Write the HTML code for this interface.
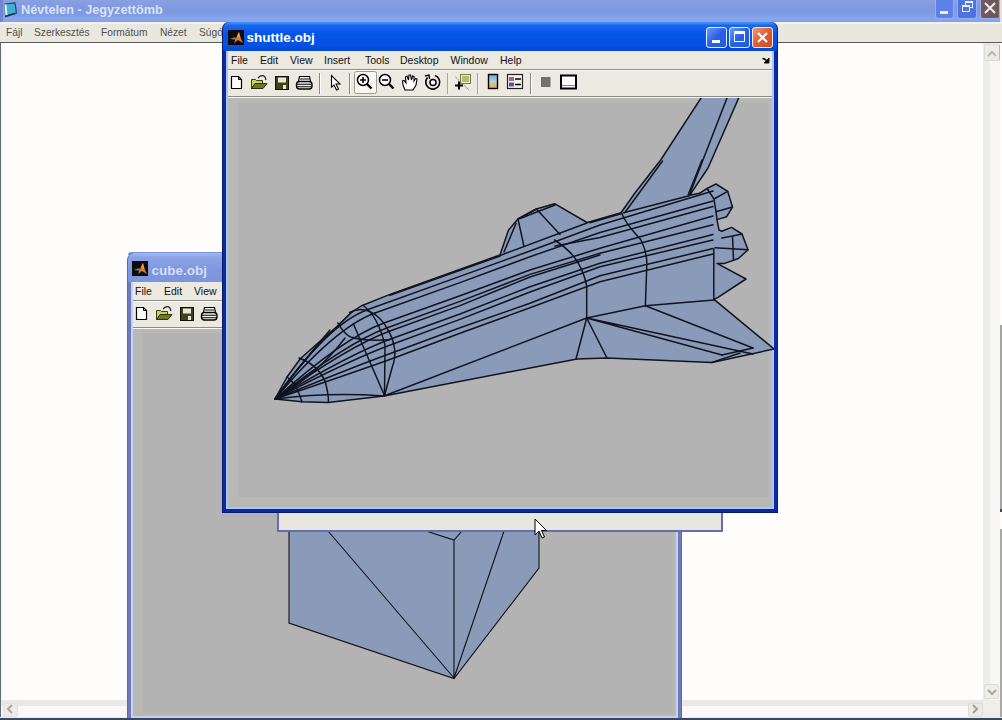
<!DOCTYPE html>
<html><head><meta charset="utf-8">
<style>
*{margin:0;padding:0;box-sizing:border-box}
html,body{width:1002px;height:720px;overflow:hidden;background:#fffdfb;font-family:"Liberation Sans",sans-serif;font-size:11px}
.abs{position:absolute}
.menu span{position:absolute;color:#111;font-size:10.5px;top:3px}
.ttl{position:absolute;font-weight:bold;font-size:13px;white-space:nowrap}
svg{position:absolute;left:0;top:0}
</style></head><body>
<!-- ===== NOTEPAD ===== -->
<div class="abs" style="left:0;top:0;width:1002px;height:22px;background:linear-gradient(180deg,#8aa0e2 0%,#7f98e0 40%,#7e9ae2 65%,#8aa6ec 85%,#84a0e8 100%)"></div>
<div class="abs" style="left:0;top:0;width:3px;height:22px;background:#6f86d0"></div>
<div class="ttl" style="left:21px;top:3px;color:#d8e3f8;font-size:12.7px">Névtelen - Jegyzettömb</div>
<svg width="18" height="18" style="left:2px;top:1px"><path d="M3,3 L13,2 L14.5,12 L4,15 Z" fill="#3fb0d2" stroke="#1f4a70" stroke-width="1.2"/><path d="M3.5,3.5 L4.5,14.5" stroke="#e0f6ff" stroke-width="2"/><path d="M3,15.5 L13,12.5" stroke="#1a3050" stroke-width="1.5"/></svg>
<div class="abs" style="left:935px;top:-3px;width:19px;height:22px;background:#5d80e8;border:1px solid #98b0f0;border-radius:3px"><div class="abs" style="left:4px;top:13px;width:8px;height:3px;background:#e8eefc"></div></div>
<div class="abs" style="left:957px;top:-3px;width:20px;height:22px;background:#4f74e0;border:1px solid #98b0f0;border-radius:3px">
  <div class="abs" style="left:7px;top:3px;width:8px;height:7px;border:1px solid #e8eefc;border-top:2px solid #e8eefc"></div>
  <div class="abs" style="left:4px;top:7px;width:8px;height:7px;border:1px solid #e8eefc;border-top:2px solid #e8eefc;background:#4f74e0"></div>
</div>
<div class="abs" style="left:980px;top:-3px;width:20px;height:22px;background:#6e5a5c;border:1px solid #98b0f0;border-radius:3px">
  <svg width="18" height="20" style="left:0;top:0"><path d="M4,5 L14,15 M14,5 L4,15" stroke="#f0ecec" stroke-width="2"/></svg>
</div>
<div class="abs" style="left:1000px;top:0;width:2px;height:22px;background:#e8e0d8"></div>
<div class="abs" style="left:0;top:22px;width:1002px;height:20px;background:#e9e8df"></div><div class="abs" style="left:0;top:22px;width:1002px;height:2px;background:#f2f1ea"></div>
<div class="menu" style="position:absolute;left:0;top:22px;width:230px;height:20px">
  <span style="left:6px;font-size:10.2px;color:#505050;top:4.5px">Fájl</span>
  <span style="left:34px;font-size:10.2px;color:#505050;top:4.5px">Szerkesztés</span>
  <span style="left:101px;font-size:10.2px;color:#505050;top:4.5px">Formátum</span>
  <span style="left:160px;font-size:10.2px;color:#505050;top:4.5px">Nézet</span>
  <span style="left:199px;font-size:10.2px;color:#505050;top:4.5px">Súgó</span>
</div>
<div class="abs" style="left:0;top:42px;width:1002px;height:1px;background:#585858"></div>
<div class="abs" style="left:0;top:43px;width:1px;height:677px;background:#646a78"></div><div class="abs" style="left:1px;top:43px;width:2px;height:657px;background:#f6f8fc"></div>
<!-- vertical scrollbar -->
<div class="abs" style="left:983px;top:43px;width:17px;height:657px;background:#f7f7f5"></div>
<div class="abs" style="left:983px;top:43px;width:7px;height:657px;background:#ededeb"></div>
<div class="abs" style="left:984px;top:44px;width:16px;height:17px;background:#ecebe6;border:1px solid #dedcd6;border-right:1px solid #b8b8b4;border-radius:2px"></div>
<svg width="16" height="12" style="left:984px;top:48px"><path d="M4,8 L8,4 L12,8" stroke="#b8b8b0" stroke-width="2" fill="none"/></svg>
<div class="abs" style="left:1000px;top:325px;width:2px;height:185px;background:#a4a4a4"></div>
<div class="abs" style="left:1000px;top:509px;width:2px;height:3px;background:#5c4434"></div>
<div class="abs" style="left:1000px;top:529px;width:2px;height:188px;background:#a8a8a8"></div>
<div class="abs" style="left:984px;top:684px;width:15px;height:15px;background:#eeede8;border:1px solid #e0ded8;border-radius:2px"></div>
<svg width="16" height="12" style="left:984px;top:686px"><path d="M4,4 L8,8 L12,4" stroke="#a8a8a0" stroke-width="2" fill="none"/></svg>
<!-- horizontal scrollbar -->
<div class="abs" style="left:1px;top:700px;width:982px;height:17px;background:#f9f8f6"></div>
<div class="abs" style="left:1px;top:700px;width:982px;height:6px;background:#e9e8e4"></div>
<div class="abs" style="left:3px;top:703px;width:15px;height:14px;background:#ecebe6;border:1px solid #e4e2dc;border-radius:2px"></div>
<svg width="16" height="16" style="left:2px;top:701px"><path d="M10,4 L6,8 L10,12" stroke="#a8a8a0" stroke-width="2" fill="none"/></svg>
<div class="abs" style="left:968px;top:703px;width:15px;height:14px;background:#ecebe6;border:1px solid #dedcd6;border-radius:2px"></div>
<svg width="16" height="16" style="left:967px;top:700px"><path d="M6,5 L10,9 L6,13" stroke="#a0a09a" stroke-width="2" fill="none"/></svg>
<div class="abs" style="left:983px;top:700px;width:17px;height:17px;background:#efeeea"></div>
<div class="abs" style="left:0;top:717px;width:1002px;height:1px;background:#e8ecf8"></div><div class="abs" style="left:0;top:718px;width:1002px;height:2px;background:#3c4660"></div>
<div class="abs" style="left:128px;top:252px;width:553px;height:3px;background:#7b94dc;border-radius:7px 7px 0 0"></div><div class="abs" style="left:127px;top:253px;width:555px;height:477px;background:#6e7abc;border:1px solid #5e68a4;border-top:none;border-radius:7px 7px 0 0"></div>
<div class="abs" style="left:128px;top:253px;width:553px;height:29px;background:linear-gradient(180deg,#a4b8f0 0%,#8ca4e6 15%,#7e98e0 60%,#7b94dc 100%);border-radius:7px 7px 0 0"></div>
<div class="abs" style="left:131px;top:282px;width:547px;height:444px;background:#c8d2f2"></div>
<div class="abs" style="left:133px;top:282px;width:543px;height:442px;background:#b4b4b4"></div>
<div class="abs" style="left:133px;top:282px;width:543px;height:19px;background:#ebe9e0;border-bottom:1px solid #8e8e8a"></div>
<div class="abs" style="left:133px;top:301px;width:543px;height:1px;background:#fbfaf6"></div>
<div class="abs" style="left:133px;top:302px;width:543px;height:26px;background:#ebe9e0;border-bottom:1px solid #8a8a86"></div>
<div class="abs" style="left:133px;top:328px;width:543px;height:1px;background:#f6f6f2"></div>
<div class="abs" style="left:133px;top:329px;width:543px;height:395px;background:#b8b8b4"></div>
<div class="abs" style="left:143px;top:333px;width:530px;height:381px;background:#b3b3b3"></div>
<svg width="17" height="16" style="left:132px;top:261px"><rect width="16" height="15" fill="#0e0c0a"/><path d="M2,9 L7,7 L9,10 Z" fill="#5a8a90"/><path d="M6,13 L9,6 L11,2 L13,9 L15,13 L10,10 Z" fill="#e07a30"/><path d="M9,6 L11,2 L12,8 Z" fill="#f0a050"/></svg>
<div class="ttl" style="left:151.5px;top:262.5px;color:#d4dff8;font-size:13.5px">cube.obj</div>
<div class="menu abs" style="left:133px;top:282px;width:545px;height:19px"><span style="left:2px">File</span><span style="left:31px">Edit</span><span style="left:61px">View</span></div>
<svg width="1002" height="720" style="left:0;top:0"><g transform="translate(-95,231)"><path d="M231.5,76.5 L238.5,76.5 L241.5,79.5 L241.5,88.5 L231.5,88.5 Z" fill="#fff" stroke="#000" stroke-width="1.2"/><path d="M238.5,76.5 L238.5,79.5 L241.5,79.5" fill="none" stroke="#000"/><path d="M251.5,79.5 L255.5,79.5 L256.5,80.5 L262.5,80.5 L262.5,83 L251.5,88.5 Z" fill="#c8d060" stroke="#3a4010"/><path d="M251.5,88.5 L255,83.5 L267,83.5 L263,88.5 Z" fill="#6c7a20" stroke="#2a3008"/><path d="M258,78 Q262,74 265,77 L266,80" fill="none" stroke="#202020" stroke-width="1.2"/><rect x="275.5" y="76.5" width="13" height="13" fill="#3c4418" stroke="#101008"/><rect x="278" y="77.5" width="8" height="5" fill="#e8e8d8"/><rect x="283" y="85" width="3" height="4" fill="#e8e8d8"/><path d="M299.5,76.5 L309.5,76.5 L310.5,81.5 L298.5,81.5 Z" fill="#fff" stroke="#000" stroke-width="1.2"/><path d="M300,79 L309.5,79" stroke="#000" stroke-width="1"/><rect x="296.5" y="81.5" width="15.5" height="7.5" rx="3" fill="#f4f4ee" stroke="#000" stroke-width="1.4"/><path d="M297,84.3 L311.5,84.3 M297,86.8 L311.5,86.8" stroke="#000" stroke-width="1.1"/><path d="M319.5,73 L319.5,94" stroke="#8a8a84" stroke-width="1"/><path d="M320.5,73 L320.5,94" stroke="#fafaf6" stroke-width="1"/><path d="M349.5,73 L349.5,94" stroke="#8a8a84" stroke-width="1"/><path d="M350.5,73 L350.5,94" stroke="#fafaf6" stroke-width="1"/><path d="M447.8,73 L447.8,94" stroke="#8a8a84" stroke-width="1"/><path d="M448.8,73 L448.8,94" stroke="#fafaf6" stroke-width="1"/><path d="M477.8,73 L477.8,94" stroke="#8a8a84" stroke-width="1"/><path d="M478.8,73 L478.8,94" stroke="#fafaf6" stroke-width="1"/><path d="M530.5,73 L530.5,94" stroke="#8a8a84" stroke-width="1"/><path d="M531.5,73 L531.5,94" stroke="#fafaf6" stroke-width="1"/><path d="M331.5,75.5 L331.5,87 L334,85 L336.5,90 L338.5,89 L336,84 L340,84 Z" fill="#fff" stroke="#000" stroke-width="1.1"/><rect x="354.5" y="71.5" width="22" height="22" rx="2" fill="#f7f6f1" stroke="#9a9a96"/><circle cx="363" cy="80" r="5.5" fill="#fff" stroke="#000" stroke-width="1.5"/><path d="M367,84 L371.5,88.5" stroke="#000" stroke-width="2.4"/><path d="M360,80 L366,80 M363,77 L363,83" stroke="#000" stroke-width="1.6"/><circle cx="385" cy="80" r="5.5" fill="#fff" stroke="#000" stroke-width="1.5"/><path d="M389,84 L393.5,88.5" stroke="#000" stroke-width="2.4"/><path d="M382,80 L388,80" stroke="#000" stroke-width="1.6"/><path d="M405,90 L403,85 L402.5,81 L404,80.5 L406,83 L405.5,77 L407,76 L408.5,80 L409,75 L410.5,75 L411.5,80 L412.5,76 L414,76.5 L414,81 L415.5,78.5 L417,79 L416,85 L413,90 Z" fill="#fff" stroke="#000" stroke-width="1.1"/><path d="M427.5,77.5 A7,7 0 1 0 435,75.5" fill="none" stroke="#000" stroke-width="1.6"/><path d="M425,76 L429,75 L429.5,79" fill="none" stroke="#000" stroke-width="1.4"/><circle cx="433" cy="82.5" r="3" fill="#fff" stroke="#000" stroke-width="1.5"/><rect x="460.5" y="74.5" width="10" height="9" fill="#eef0b4" stroke="#7a7a40"/><path d="M462,77 L469,77 M462,79 L469,79 M462,81 L469,81" stroke="#6a7a20" stroke-width="0.9"/><path d="M455.5,77 L469,90" stroke="#6060a0" stroke-width="0.8" stroke-dasharray="2,1"/><path d="M455,85.5 L463,85.5 M459,81.5 L459,89.5" stroke="#000" stroke-width="2"/><defs><linearGradient id="cb" x1="0" y1="0" x2="0" y2="1"><stop offset="0" stop-color="#6aa0ff"/><stop offset="0.5" stop-color="#b0d8c0"/><stop offset="1" stop-color="#ff9a40"/></linearGradient></defs><rect x="488.5" y="74.5" width="9" height="14" fill="url(#cb)" stroke="#000" stroke-width="1.4"/><rect x="507.5" y="74.5" width="15" height="14" fill="#f4f4ec" stroke="#202020" stroke-width="1.2"/><rect x="509" y="77" width="5" height="4" fill="#c06060"/><rect x="509" y="82.5" width="5" height="4" fill="#5050c0"/><path d="M515,79 L521,79 M515,84.5 L521,84.5" stroke="#000" stroke-width="1.5"/><rect x="541" y="77" width="9.5" height="10" fill="#707070"/><rect x="561" y="75.5" width="15" height="13" fill="#fff" stroke="#000" stroke-width="2"/><path d="M562,85.5 L575,85.5" stroke="#888" stroke-width="1"/></g></svg><svg width="1002" height="720"><g stroke="#111" stroke-width="1.1" fill="none">
  <polygon points="289,531 539,531 539,568 454,678.5 289,623" fill="#8a9bba"/>
  <path d="M454,540 L454,678 M426,531 L454,540 L462,531 M328,531 L454,678 M504,531 L454,678"/>
</g></svg><div class="abs" style="left:131px;top:716px;width:547px;height:2px;background:#c8d0ee"></div><div class="abs" style="left:127px;top:718px;width:555px;height:2px;background:#3c4660"></div><div class="abs" style="left:277px;top:509px;width:446px;height:23px;background:#e8e7df;border:2px solid #646eae;border-top:none"></div><div class="abs" style="left:222px;top:22px;width:556px;height:491px;background:#0c2aa6;border:1px solid #081a70;border-top:none;border-radius:7px 7px 0 0"></div>
<div class="abs" style="left:223px;top:22px;width:554px;height:29px;background:linear-gradient(180deg,#4a98fa 0%,#1a66f0 12%,#0556e8 40%,#0452e4 80%,#0648d2 100%);border-radius:7px 7px 0 0"></div>
<div class="abs" style="left:226px;top:51px;width:548px;height:458px;background:#a8c6f6"></div>
<div class="abs" style="left:228px;top:51px;width:544px;height:456px;background:#b4b4b4"></div>
<div class="abs" style="left:228px;top:51px;width:544px;height:19px;background:#ebe9e0;border-bottom:1px solid #8e8e8a"></div>
<div class="abs" style="left:228px;top:70px;width:544px;height:1px;background:#fbfaf6"></div>
<div class="abs" style="left:228px;top:71px;width:544px;height:26px;background:#ebe9e0;border-bottom:1px solid #8a8a86"></div>
<div class="abs" style="left:228px;top:97px;width:544px;height:1px;background:#f6f6f2"></div>
<div class="abs" style="left:228px;top:98px;width:544px;height:409px;background:#b8b8b4"></div>
<div class="abs" style="left:238px;top:102px;width:531px;height:395px;background:#b3b3b3"></div>
<svg width="17" height="16" style="left:228px;top:30px"><rect width="16" height="15" fill="#0e0c0a"/><path d="M2,9 L7,7 L9,10 Z" fill="#5a8a90"/><path d="M6,13 L9,6 L11,2 L13,9 L15,13 L10,10 Z" fill="#e07a30"/><path d="M9,6 L11,2 L12,8 Z" fill="#f0a050"/></svg>
<div class="ttl" style="left:246.5px;top:29.5px;color:#ffffff;font-size:13.5px">shuttle.obj</div>
<div class="menu abs" style="left:228px;top:51px;width:546px;height:19px"><span style="left:3px">File</span><span style="left:32px">Edit</span><span style="left:62px">View</span><span style="left:96px">Insert</span><span style="left:137px">Tools</span><span style="left:172px">Desktop</span><span style="left:222.5px">Window</span><span style="left:272px">Help</span></div>
<svg width="1002" height="720" style="left:0;top:0"><g transform="translate(0,0)"><path d="M231.5,76.5 L238.5,76.5 L241.5,79.5 L241.5,88.5 L231.5,88.5 Z" fill="#fff" stroke="#000" stroke-width="1.2"/><path d="M238.5,76.5 L238.5,79.5 L241.5,79.5" fill="none" stroke="#000"/><path d="M251.5,79.5 L255.5,79.5 L256.5,80.5 L262.5,80.5 L262.5,83 L251.5,88.5 Z" fill="#c8d060" stroke="#3a4010"/><path d="M251.5,88.5 L255,83.5 L267,83.5 L263,88.5 Z" fill="#6c7a20" stroke="#2a3008"/><path d="M258,78 Q262,74 265,77 L266,80" fill="none" stroke="#202020" stroke-width="1.2"/><rect x="275.5" y="76.5" width="13" height="13" fill="#3c4418" stroke="#101008"/><rect x="278" y="77.5" width="8" height="5" fill="#e8e8d8"/><rect x="283" y="85" width="3" height="4" fill="#e8e8d8"/><path d="M299.5,76.5 L309.5,76.5 L310.5,81.5 L298.5,81.5 Z" fill="#fff" stroke="#000" stroke-width="1.2"/><path d="M300,79 L309.5,79" stroke="#000" stroke-width="1"/><rect x="296.5" y="81.5" width="15.5" height="7.5" rx="3" fill="#f4f4ee" stroke="#000" stroke-width="1.4"/><path d="M297,84.3 L311.5,84.3 M297,86.8 L311.5,86.8" stroke="#000" stroke-width="1.1"/><path d="M319.5,73 L319.5,94" stroke="#8a8a84" stroke-width="1"/><path d="M320.5,73 L320.5,94" stroke="#fafaf6" stroke-width="1"/><path d="M349.5,73 L349.5,94" stroke="#8a8a84" stroke-width="1"/><path d="M350.5,73 L350.5,94" stroke="#fafaf6" stroke-width="1"/><path d="M447.8,73 L447.8,94" stroke="#8a8a84" stroke-width="1"/><path d="M448.8,73 L448.8,94" stroke="#fafaf6" stroke-width="1"/><path d="M477.8,73 L477.8,94" stroke="#8a8a84" stroke-width="1"/><path d="M478.8,73 L478.8,94" stroke="#fafaf6" stroke-width="1"/><path d="M530.5,73 L530.5,94" stroke="#8a8a84" stroke-width="1"/><path d="M531.5,73 L531.5,94" stroke="#fafaf6" stroke-width="1"/><path d="M331.5,75.5 L331.5,87 L334,85 L336.5,90 L338.5,89 L336,84 L340,84 Z" fill="#fff" stroke="#000" stroke-width="1.1"/><rect x="354.5" y="71.5" width="22" height="22" rx="2" fill="#f7f6f1" stroke="#9a9a96"/><circle cx="363" cy="80" r="5.5" fill="#fff" stroke="#000" stroke-width="1.5"/><path d="M367,84 L371.5,88.5" stroke="#000" stroke-width="2.4"/><path d="M360,80 L366,80 M363,77 L363,83" stroke="#000" stroke-width="1.6"/><circle cx="385" cy="80" r="5.5" fill="#fff" stroke="#000" stroke-width="1.5"/><path d="M389,84 L393.5,88.5" stroke="#000" stroke-width="2.4"/><path d="M382,80 L388,80" stroke="#000" stroke-width="1.6"/><path d="M405,90 L403,85 L402.5,81 L404,80.5 L406,83 L405.5,77 L407,76 L408.5,80 L409,75 L410.5,75 L411.5,80 L412.5,76 L414,76.5 L414,81 L415.5,78.5 L417,79 L416,85 L413,90 Z" fill="#fff" stroke="#000" stroke-width="1.1"/><path d="M427.5,77.5 A7,7 0 1 0 435,75.5" fill="none" stroke="#000" stroke-width="1.6"/><path d="M425,76 L429,75 L429.5,79" fill="none" stroke="#000" stroke-width="1.4"/><circle cx="433" cy="82.5" r="3" fill="#fff" stroke="#000" stroke-width="1.5"/><rect x="460.5" y="74.5" width="10" height="9" fill="#eef0b4" stroke="#7a7a40"/><path d="M462,77 L469,77 M462,79 L469,79 M462,81 L469,81" stroke="#6a7a20" stroke-width="0.9"/><path d="M455.5,77 L469,90" stroke="#6060a0" stroke-width="0.8" stroke-dasharray="2,1"/><path d="M455,85.5 L463,85.5 M459,81.5 L459,89.5" stroke="#000" stroke-width="2"/><defs><linearGradient id="cb" x1="0" y1="0" x2="0" y2="1"><stop offset="0" stop-color="#6aa0ff"/><stop offset="0.5" stop-color="#b0d8c0"/><stop offset="1" stop-color="#ff9a40"/></linearGradient></defs><rect x="488.5" y="74.5" width="9" height="14" fill="url(#cb)" stroke="#000" stroke-width="1.4"/><rect x="507.5" y="74.5" width="15" height="14" fill="#f4f4ec" stroke="#202020" stroke-width="1.2"/><rect x="509" y="77" width="5" height="4" fill="#c06060"/><rect x="509" y="82.5" width="5" height="4" fill="#5050c0"/><path d="M515,79 L521,79 M515,84.5 L521,84.5" stroke="#000" stroke-width="1.5"/><rect x="541" y="77" width="9.5" height="10" fill="#707070"/><rect x="561" y="75.5" width="15" height="13" fill="#fff" stroke="#000" stroke-width="2"/><path d="M562,85.5 L575,85.5" stroke="#888" stroke-width="1"/></g></svg>
<div class="abs" style="left:706px;top:27px;width:21px;height:21px;background:linear-gradient(135deg,#6a9af8,#2a60e8 50%,#2458e0);border:1px solid #e8f0ff;border-radius:3px"><div class="abs" style="left:5px;top:12px;width:8px;height:3px;background:#fff"></div></div>
<div class="abs" style="left:729px;top:27px;width:21px;height:21px;background:linear-gradient(135deg,#6a9af8,#2a60e8 50%,#2458e0);border:1px solid #e8f0ff;border-radius:3px"><div class="abs" style="left:4px;top:3px;width:11px;height:11px;border:1px solid #fff;border-top:3px solid #fff"></div></div>
<div class="abs" style="left:752px;top:27px;width:21px;height:21px;background:linear-gradient(135deg,#f09a78,#e05a32 50%,#d04a24);border:1px solid #f4ecec;border-radius:3px"><svg width="19" height="19" style="left:0;top:0"><path d="M5,5 L14,14 M14,5 L5,14" stroke="#fff" stroke-width="2.2"/></svg></div>
<svg width="12" height="10" style="left:760px;top:55px"><path d="M9,3 L9,8 L4,8 Z" fill="#000" stroke="#000" stroke-width="0.9"/><path d="M2.5,3.5 L4.5,4 L7,6" stroke="#000" stroke-width="1.6" fill="none"/></svg>
<!-- shuttle model -->
<svg width="1002" height="720"><defs><clipPath id="ax"><rect x="228" y="98" width="546" height="410"/></clipPath></defs><g clip-path="url(#ax)" stroke="#10141e" stroke-width="1.5" fill="none" stroke-linejoin="round" stroke-linecap="round"><polygon fill="#8a9bba" points="275,399 281,388 287,377 300.5,358.5 319.7,341.5 337.8,326 350.8,313 361,306 390,294.4 500,255 508.5,230 518,219 536.4,209 554.6,203.7 587,222.5 590,221.7 621,212.7 635.5,192.3 660.7,160 703,95 740,95 708,168 689.7,195.3 699.5,193.3 707,188.5 716,184 727.7,191.4 732.5,207 726.7,216.7 717,219.6 719,230 721.8,231.3 731.5,227.4 742,234 748,249.8 738.4,258.5 724.7,263.4 717,263.4 746,279 718,297.4 714,299.4 774,349 712,362.4 607,358 577,359 384,396 328,402.5 302,401.8"/><path d="M368,309.5 L460,276.4 L530,251 L600,225 L713,191"/><path d="M375,313 L460,282.6 L530,256.7 L600,232.5 L713,201"/><path d="M555,246 L600,237.5 L713,206.5"/><path d="M384,323 L460,295.8 L530,270 L600,248.3 L713,216"/><path d="M388,327.5 L460,301.4 L530,274.4 L600,253.3 L713,224.7"/><path d="M390,331 L460,305.6 L530,277 L600,255"/><path d="M392,338.5 L460,314 L530,286.7 L600,263.3 L713,234.5"/><path d="M393,344 L460,319.4 L530,292 L600,266.7 L713,240"/><path d="M394.5,352 L460,327.8 L530,303.3 L600,275.8 L713,248.5"/><path d="M394,358 L460,333.3 L530,307.8 L600,281.7 L713,254"/><path d="M275,399 Q328.0,323.9 368,309.5"/><path d="M275,399 Q335.0,327.4 375,313"/><path d="M275,399 Q344.0,337.4 384,323"/><path d="M275,399 Q348.0,341.9 388,327.5"/><path d="M275,399 Q350.0,345.4 390,331"/><path d="M275,399 Q352.0,352.9 392,338.5"/><path d="M275,399 Q353.0,358.4 393,344"/><path d="M275,399 Q354.5,366.4 394.5,352"/><path d="M275,399 Q354.0,372.4 394,358"/><path d="M275,399 Q310,350 352,312"/><path d="M275,399 Q330,392 384,396"/><path d="M275,399 Q300,365 330,330"/><path d="M275,399 Q320,372 345,338"/><path d="M390,295.4 L500,256 M590,222.7 L621,213.7"/><path d="M500,255.5 L587,223 M516,223.5 L504,252 M520,218.5 L555,205"/><path d="M384,396 L586.7,318 L645.4,305.7 L714,300"/><path d="M554.6,240 C570,250 582,262 586.7,286 L586.7,318"/><path d="M621.6,213 C626,225 636,234 641,240 C646,250 647,258 646.8,265 L645.4,305.7"/><path d="M586.7,318 L576,359 M586.7,318 L607,358 M586.7,318 L722,355 M586.7,318 L753,354 M645.4,305.7 L753,348"/><path d="M713.8,249 L713.8,300"/><path d="M623.5,212.7 L688.2,196 M662.5,161 L624.7,212.7 M702,160 L688.2,194.7"/><path d="M707,188.5 L714,199 L716,211.8 L717,219.6 M714,199 L727.7,191.4 M716,211.8 L732.5,207"/><path d="M721.8,238 L732.5,236 L742,234 M732.5,236 L733.5,259.5 M715,247.8 L748,249.8"/><path d="M727,95 L727,98 L689,196"/><path d="M518,219 L523.8,245.7 M536.4,209 L560,234.5 M518,219 L536.4,209"/><path d="M287,377 C293,381 298,388 302,402"/><path d="M299,358 C310,362 320,370 325,381 C327,388 328.5,395 328.5,402"/><path d="M349.5,312.4 C365,304 380,315 388,330 C395,342 397,355 392,368 L384.5,395.5"/><path d="M363.8,306 C372,312 380,325 385,345 L384.5,395.5"/><path d="M337.8,322.8 C342,330 346,335 350.8,337 C360,340 370,341 389.7,339.7"/><path d="M353.4,324 L384.5,395.5"/><path d="M740,353 L712,362.4 M722,355 L753,348"/></g></svg><svg width="14" height="24" style="left:534px;top:518px"><path d="M1,1 L1,17 L5,13 L8,20 L10.5,19 L7.5,12.5 L12.5,12.5 Z" fill="#fff" stroke="#000" stroke-width="1"/></svg></body></html>
